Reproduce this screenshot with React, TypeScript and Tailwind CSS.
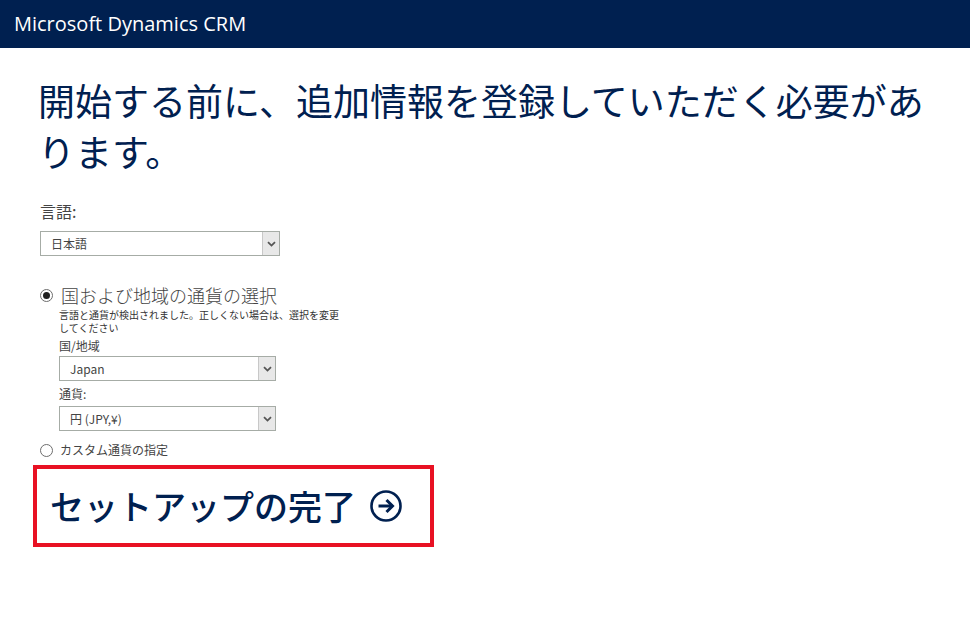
import { ReactNode } from 'react';

const jp = "font-['Noto_Sans_CJK_JP',sans-serif]";

function FakeSelect({ value, width }: { value: string; width: string }) {
  return (
    <div className={`flex h-[25px] items-stretch border border-solid border-[#a6aca6] bg-white ${width}`}>
      <div className="flex flex-1 items-center pl-[10px] text-[12px] leading-none text-[#444]">{value}</div>
      <div className="flex w-[17px] items-center justify-center border-l border-solid border-[#c8c8c8] bg-[#e8e8e8]">
        <svg width="9" height="6" viewBox="0 0 9 6">
          <path d="M1 1.2 L4.5 4.6 L8 1.2" fill="none" stroke="#555" strokeWidth="1.8" />
        </svg>
      </div>
    </div>
  );
}

function Radio({ checked, children, className }: { checked?: boolean; children: ReactNode; className?: string }) {
  return (
    <div className={`flex items-center ${className ?? ''}`}>
      <div className="flex h-[13px] w-[13px] items-center justify-center rounded-full border border-solid border-[#6d6d6d] bg-white">
        {checked && <div className="h-[7px] w-[7px] rounded-full bg-[#1f1f1f]" />}
      </div>
      {children}
    </div>
  );
}

function ArrowCircle() {
  return (
    <svg width="34" height="34" viewBox="0 0 34 34">
      <circle cx="17" cy="17" r="14.5" fill="none" stroke="#002050" strokeWidth="2.6" />
      <path d="M9.5 17 H23.5" stroke="#002050" strokeWidth="3" />
      <path d="M17.5 11 L23.5 17 L17.5 23" fill="none" stroke="#002050" strokeWidth="3" />
    </svg>
  );
}

export default function App() {
  return (
    <div className={`min-h-[632px] w-full bg-white ${jp}`}>
      <header className="flex h-12 items-center bg-[#002050] px-[14px]">
        <span className="font-['Open_Sans',sans-serif] text-[20px] text-white">Microsoft Dynamics CRM</span>
      </header>

      <main className="pl-[38px]">
        <h1 className="mt-[27px] text-[37px] font-normal leading-[51px] text-[#002050]">
          開始する前に、追加情報を登録していただく必要があ
          <br />
          ります。
        </h1>

        <div className="mt-[24px] pl-[2px]">
          <div className="text-[16px] leading-[20px] text-[#444]">言語:</div>
          <div className="mt-[10px]">
            <FakeSelect value="日本語" width="w-[240px]" />
          </div>
        </div>

        <div className="mt-[27px] pl-[2px]">
          <Radio checked>
            <span className="ml-[8px] text-[18px] font-light leading-[24px] text-[#444]">国および地域の通貨の選択</span>
          </Radio>

          <div className="pl-[19px]">
            <p className="mt-[1px] w-[280px] text-[10px] leading-[13px] text-[#333]">
              言語と通貨が検出されました。正しくない場合は、選択を変更 してください
            </p>
            <div className="mt-[4px] text-[12px] leading-[16px] text-[#444]">国/地域</div>
            <div className="mt-[2px]">
              <FakeSelect value="Japan" width="w-[217px]" />
            </div>
            <div className="mt-[5px] text-[12px] leading-[16px] text-[#444]">通貨:</div>
            <div className="mt-[4px]">
              <FakeSelect value="円 (JPY,¥)" width="w-[217px]" />
            </div>
          </div>

          <Radio className="mt-[11px]">
            <span className="ml-[7px] text-[12px] leading-[16px] text-[#444]">カスタム通貨の指定</span>
          </Radio>
        </div>

        <div className="ml-[-5px] mt-[7px] flex h-[82px] w-[401px] items-center border-[4px] border-solid border-[#e81123] pl-[13px]">
          <span className="text-[34px] font-medium leading-none tracking-[0px] text-[#002050]">セットアップの完了</span>
          <span className="ml-[13px] flex">
            <ArrowCircle />
          </span>
        </div>
      </main>
    </div>
  );
}
